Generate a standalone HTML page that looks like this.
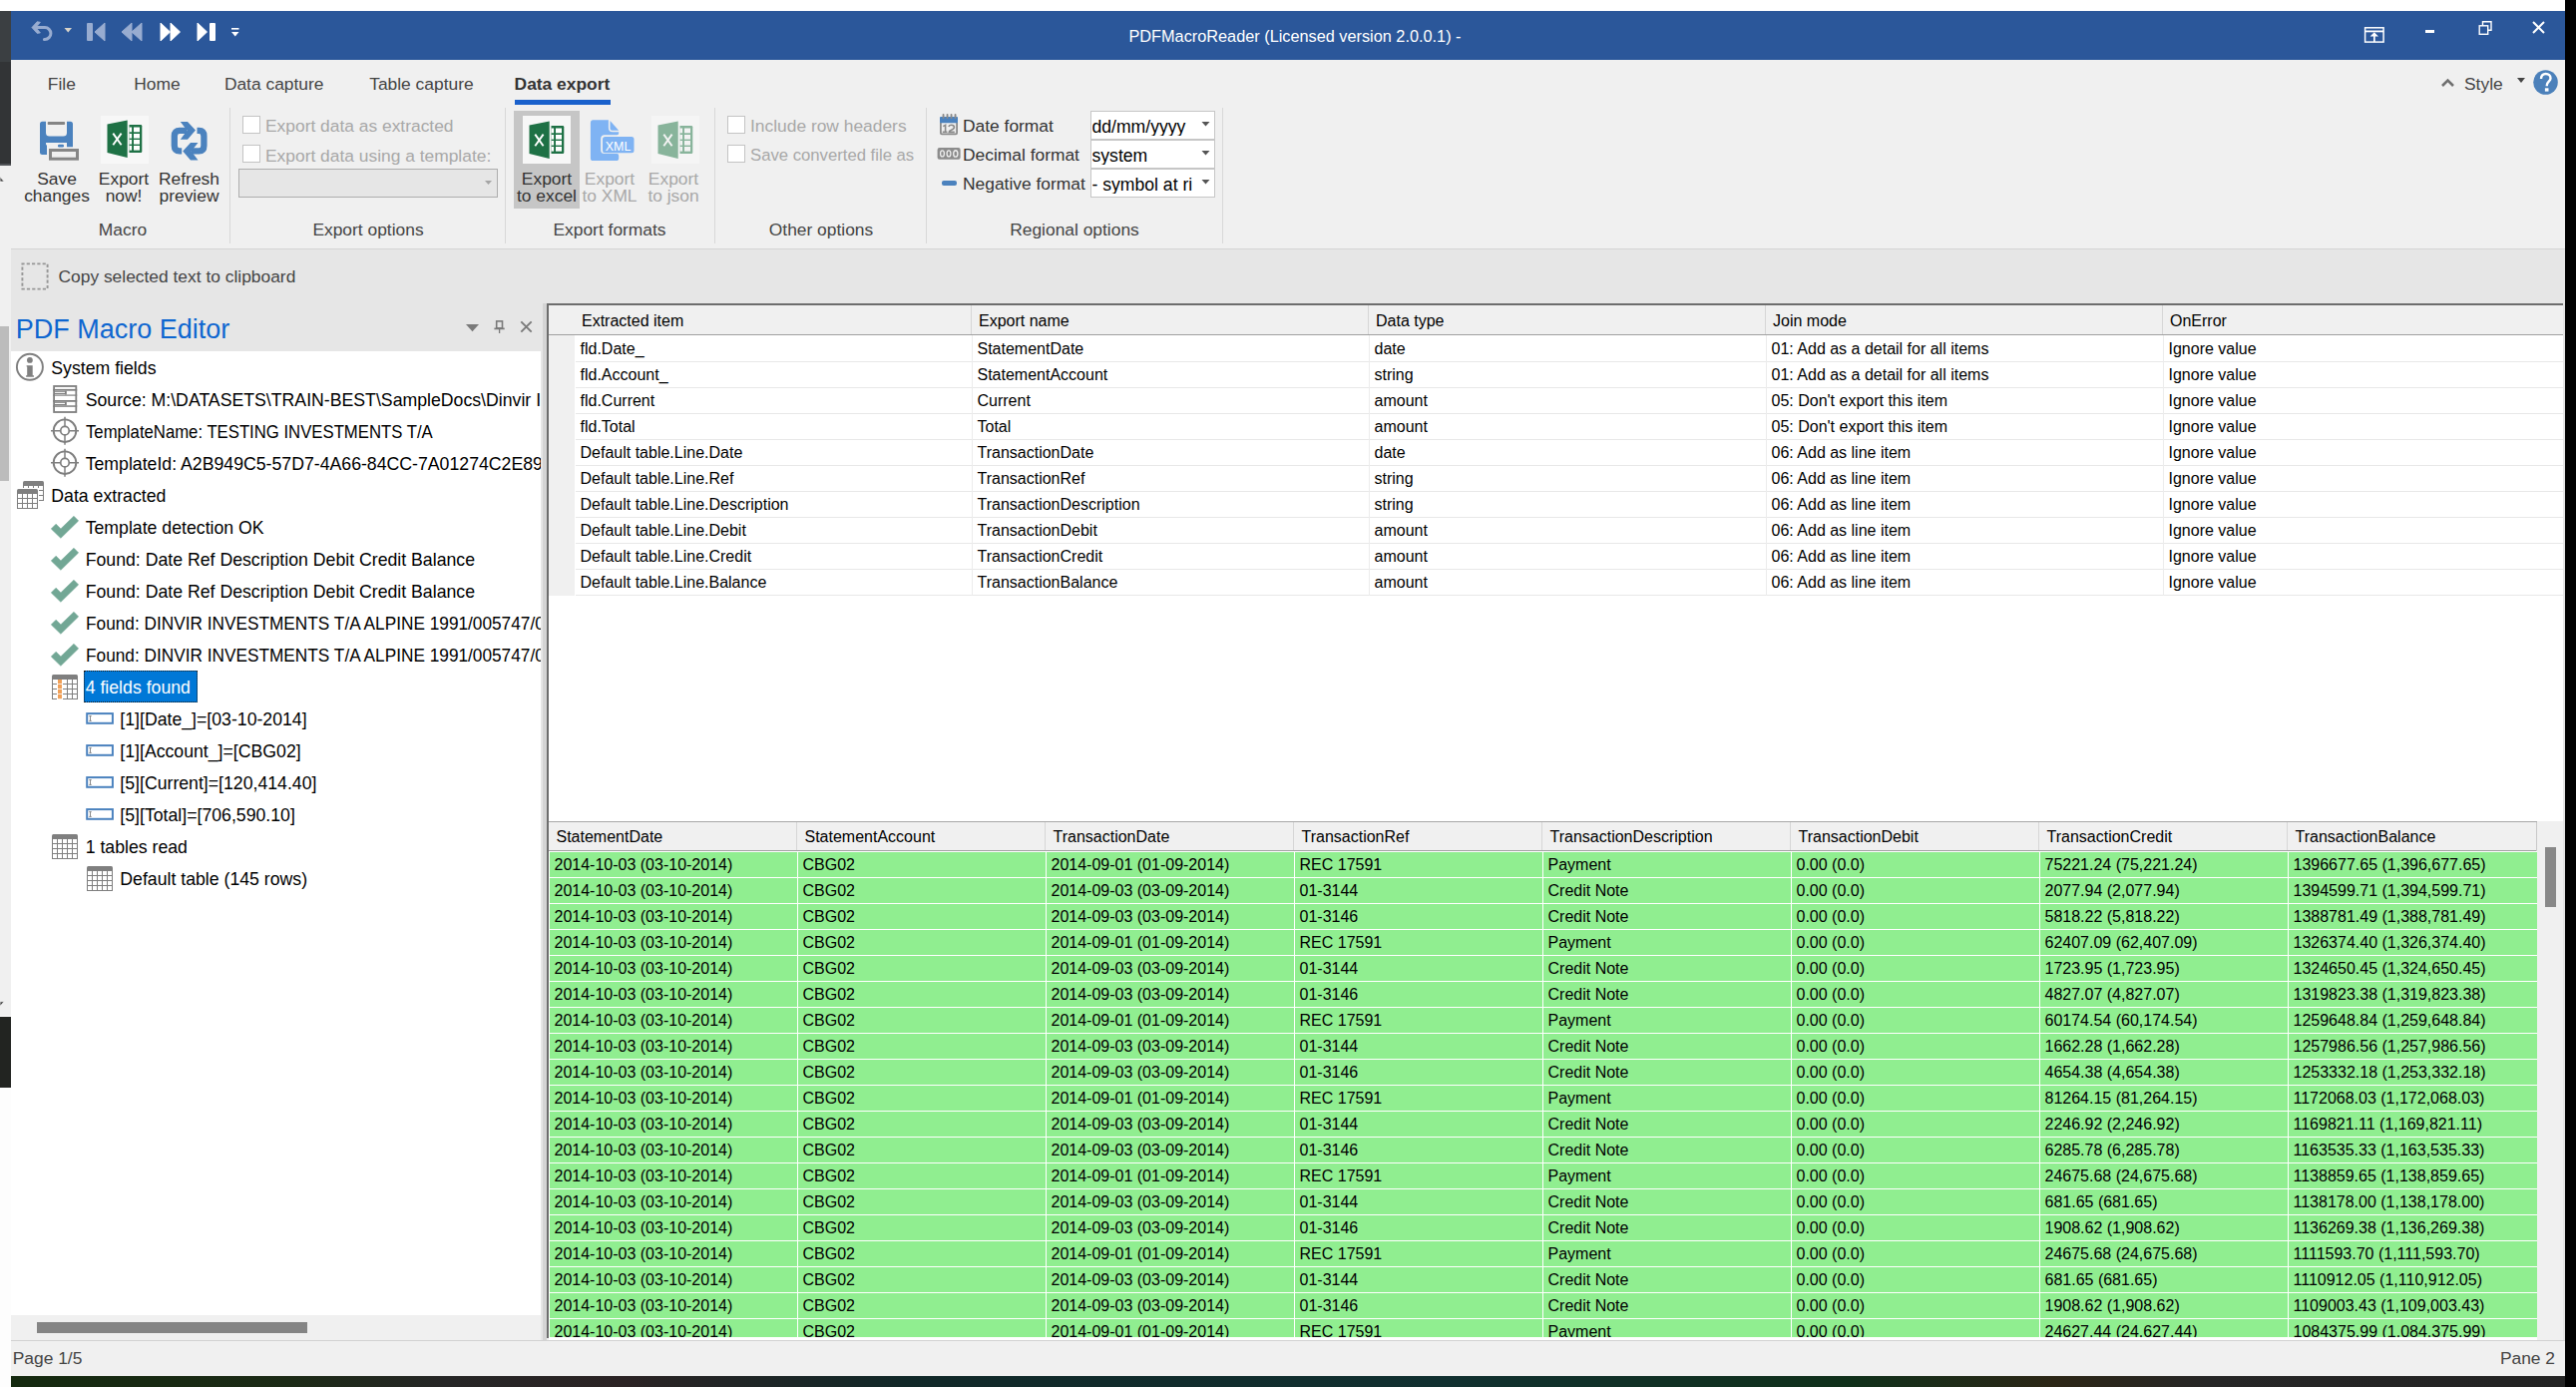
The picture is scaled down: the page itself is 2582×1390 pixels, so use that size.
<!DOCTYPE html>
<html><head><meta charset="utf-8"><title>PDFMacroReader</title>
<style>
html,body{margin:0;padding:0;}
body{width:2582px;height:1390px;position:relative;overflow:hidden;background:#f0f0f0;font-family:"Liberation Sans",sans-serif;}
.t{position:absolute;white-space:nowrap;font-family:"Liberation Sans",sans-serif;}
svg{overflow:visible}
</style></head><body>
<div style="position:absolute;left:0px;top:0px;width:2582px;height:11px;background:#ffffff;"></div>
<div style="position:absolute;left:2571px;top:0px;width:11px;height:1390px;background:#000000;"></div>
<div style="position:absolute;left:0px;top:11px;width:11px;height:51px;background:#3b3f42;"></div>
<div style="position:absolute;left:0px;top:62px;width:11px;height:103px;background:#323436;"></div>
<div style="position:absolute;left:0px;top:165px;width:11px;height:162px;background:#f0f0f0;"></div>
<div style="position:absolute;left:0px;top:327px;width:9px;height:155px;background:#bcbcbc;"></div>
<div style="position:absolute;left:9px;top:327px;width:2px;height:155px;background:#f0f0f0;"></div>
<div style="position:absolute;left:0px;top:482px;width:11px;height:536px;background:#f0f0f0;"></div>
<div style="position:absolute;left:0px;top:1019px;width:11px;height:71px;background:#222421;"></div>
<div style="position:absolute;left:0px;top:1090px;width:11px;height:300px;background:#fdfdfd;"></div>
<div style="position:absolute;left:0px;top:164px;width:11px;height:2px;background:#505357;"></div>
<svg style="position:absolute;left:0px;top:170px" width="10" height="20" viewBox="0 170 10 20"><path d="M0 177.3 L4.3 182 H0 Z" fill="#454545" stroke="#fff" stroke-width="0.7"/></svg>
<svg style="position:absolute;left:0px;top:1000px" width="10" height="12" viewBox="0 1000 10 12"><path d="M0 1003.8 H4.3 L0 1008.3 Z" fill="#454545" stroke="#fff" stroke-width="0.7"/></svg>
<div style="position:absolute;left:0px;top:1018px;width:11px;height:1px;background:#ffffff;"></div>
<div style="position:absolute;left:11px;top:1379px;width:2560px;height:11px;background:#1c241a;background:linear-gradient(90deg,#14290f 0%,#1c2a16 11%,#262626 17%,#2b2324 24%,#112828 35%,#113030 56%,#10301a 72%,#2c2616 80%,#262626 86%,#232323 100%);"></div>
<div style="position:absolute;left:11px;top:11px;width:2560px;height:49px;background:#2b579a;"></div>
<svg style="position:absolute;left:26px;top:17px" width="32" height="28" viewBox="26 17 32 28"><path d="M31.9 27.6 L37.2 21.7 L40.4 22.3 L37.3 26.1 L37.3 29.1 L40.4 32.9 L37.2 33.4 Z" fill="#98acd0" stroke="#98acd0" stroke-width="0.8" stroke-linejoin="round"/><path d="M36.5 27.6 H45 A5.9 5.9 0 0 1 45 39.4 H44.4" fill="none" stroke="#98acd0" stroke-width="3" stroke-linecap="round"/></svg>
<svg style="position:absolute;left:63px;top:26px" width="12" height="8" viewBox="0 0 12 8"><path d="M1.5 2 H9 L5.25 6.5 Z" fill="#d8d3c8"/></svg>
<svg style="position:absolute;left:86px;top:22px" width="20" height="20" viewBox="0 0 20 20"><rect x="1" y="1" width="6" height="18" rx="1" fill="#98acd0"/><path d="M19 1 V19 L9 10 Z" fill="#98acd0" stroke="#98acd0" stroke-width="1" stroke-linejoin="round"/></svg>
<svg style="position:absolute;left:121px;top:22px" width="22" height="20" viewBox="0 0 22 20"><path d="M11 1 V19 L1 10 Z M21 1 V19 L11 10 Z" fill="#98acd0" stroke="#98acd0" stroke-width="1" stroke-linejoin="round"/></svg>
<svg style="position:absolute;left:160px;top:22px" width="22" height="20" viewBox="0 0 22 20"><path d="M1 1 V19 L10.5 10 Z M11 1 V19 L20.5 10 Z" fill="#fff" stroke="#fff" stroke-width="1" stroke-linejoin="round"/></svg>
<svg style="position:absolute;left:197px;top:22px" width="21" height="20" viewBox="0 0 21 20"><path d="M1 1 V19 L10.5 10 Z" fill="#fff" stroke="#fff" stroke-width="1" stroke-linejoin="round"/><rect x="13" y="1" width="6" height="18" rx="1" fill="#fff"/></svg>
<svg style="position:absolute;left:231px;top:27px" width="10" height="11" viewBox="0 0 10 11"><rect x="1" y="1" width="7.5" height="1.6" fill="#fff"/><path d="M1 5 H8.5 L4.75 9.5 Z" fill="#fff"/></svg>
<div class="t" style="left:1131.5px;top:28.00px;font-size:16.3px;line-height:16.3px;color:#ffffff;">PDFMacroReader (Licensed version 2.0.0.1) -</div>
<svg style="position:absolute;left:2366px;top:24px" width="28" height="22" viewBox="2366 24 28 22"><rect x="2370.6" y="27.8" width="18.5" height="14.3" fill="none" stroke="#fff" stroke-width="1.5"/><path d="M2370.6 31.4 H2389.1" stroke="#fff" stroke-width="1.8"/><path d="M2379.8 32.2 L2384 36.5 H2375.6 Z" fill="#fff"/><rect x="2379" y="36" width="1.7" height="6.1" fill="#fff"/></svg>
<div style="position:absolute;left:2431px;top:30px;width:9px;height:3px;background:#ffffff;"></div>
<svg style="position:absolute;left:2484px;top:20px" width="15" height="16" viewBox="0 0 15 16"><rect x="1.2" y="5.8" width="8.5" height="8.5" fill="none" stroke="#fff" stroke-width="1.4"/><path d="M4.5 5.8 V1.7 H13 V10.2 H9.7" fill="none" stroke="#fff" stroke-width="1.4"/></svg>
<svg style="position:absolute;left:2538px;top:21px" width="13" height="13" viewBox="0 0 13 13"><path d="M1 1 L12 12 M12 1 L1 12" stroke="#fff" stroke-width="2"/></svg>
<div style="position:absolute;left:11px;top:60px;width:2560px;height:189px;background:#f0f0f0;"></div>
<div style="position:absolute;left:11px;top:249px;width:2560px;height:1px;background:#d5d5d5;"></div>
<div class="t" style="left:47.8px;top:75.57px;font-size:17.4px;line-height:17.4px;color:#444444;">File</div>
<div class="t" style="left:134.2px;top:75.57px;font-size:17.4px;line-height:17.4px;color:#444444;">Home</div>
<div class="t" style="left:224.9px;top:75.57px;font-size:17.4px;line-height:17.4px;color:#444444;">Data capture</div>
<div class="t" style="left:370.2px;top:75.57px;font-size:17.4px;line-height:17.4px;color:#444444;">Table capture</div>
<div class="t" style="left:515.6px;top:75.57px;font-size:17.4px;line-height:17.4px;color:#333333;font-weight:bold;">Data export</div>
<div style="position:absolute;left:516px;top:100px;width:96px;height:5px;background:#1a61cc;"></div>
<svg style="position:absolute;left:2446px;top:77px" width="15" height="12" viewBox="0 0 15 12"><path d="M2 9 L7.5 3.5 L13 9" fill="none" stroke="#707070" stroke-width="2.6"/></svg>
<div class="t" style="left:2470px;top:75.67px;font-size:17.4px;line-height:17.4px;color:#444444;">Style</div>
<svg style="position:absolute;left:2522px;top:77px" width="10" height="8" viewBox="0 0 10 8"><path d="M1 1 H9 L5 6 Z" fill="#444"/></svg>
<svg style="position:absolute;left:2538px;top:69px" width="27" height="27" viewBox="0 0 27 27"><circle cx="13.5" cy="13.5" r="12.3" fill="#4b80ba"/><path d="M9 10 C9 6.5 11 5 13.7 5 C16.5 5 18.5 6.8 18.5 9.5 C18.5 12.5 14.8 13 14.8 16.5 V17.2" fill="none" stroke="#fff" stroke-width="2.4"/><rect x="12.9" y="19.3" width="3.6" height="3.3" fill="#fff"/></svg>
<div style="position:absolute;left:230px;top:108px;width:1px;height:136px;background:#d8d8d8;"></div>
<div style="position:absolute;left:506px;top:108px;width:1px;height:136px;background:#d8d8d8;"></div>
<div style="position:absolute;left:716px;top:108px;width:1px;height:136px;background:#d8d8d8;"></div>
<div style="position:absolute;left:928px;top:108px;width:1px;height:136px;background:#d8d8d8;"></div>
<div style="position:absolute;left:1225px;top:108px;width:1px;height:136px;background:#d8d8d8;"></div>
<svg style="position:absolute;left:34px;top:114px" width="50" height="52" viewBox="0 0 50 52">
<path d="M8.5 7.7 H12 V19 Q12 22.5 15.5 22.5 H29.5 Q33 22.5 33 19 V7.7 H36.5 Q39 7.7 39 10.2 V33.2 H33 V28.9 H12 V30.5 L13 32 V40.9 H8.5 Q6 40.9 6 38.4 V10.2 Q6 7.7 8.5 7.7 Z" fill="#4b82be"/>
<rect x="13.7" y="8" width="17.4" height="2.9" rx="1" fill="#848484"/>
<rect x="24" y="30.7" width="6" height="2.7" rx="1.2" fill="#4b82be"/>
<rect x="16.5" y="36.5" width="27" height="8.7" fill="none" stroke="#868686" stroke-width="3"/>
</svg>
<div style="position:absolute;left:101px;top:116px;width:48px;height:48px;background:rgba(255,255,255,0.45);"></div>
<svg style="position:absolute;left:106.7px;top:120px" width="37" height="40" viewBox="0 0 37 40">
<path d="M0.5 4.6 L20.7 0.4 V38.1 L0.5 33 Z" fill="#1e7145"/>
<path d="M6.3 13.6 L14.6 25.3 M14.6 13.6 L6.3 25.3" stroke="#ffffff" stroke-width="1.9"/>
<path d="M22.5 5 H34 Q35.3 5 35.3 6.3 V31.7 Q35.3 33 34 33 H22.5 Z" fill="#1e7145"/>
<rect x="27" y="7.5" width="6" height="4.8" fill="#ffffff"/>
<rect x="27" y="14" width="6" height="4.6" fill="#ffffff"/>
<rect x="27" y="20" width="6" height="4.6" fill="#ffffff"/>
<rect x="27" y="26" width="6" height="4.6" fill="#ffffff"/>
<rect x="22.5" y="7.5" width="2.6" height="4.8" fill="#ffffff"/>
<rect x="22.5" y="14" width="2.6" height="4.6" fill="#ffffff"/>
<rect x="22.5" y="20" width="2.6" height="4.6" fill="#ffffff"/>
<rect x="22.5" y="26" width="2.6" height="4.6" fill="#ffffff"/>
</svg>
<svg style="position:absolute;left:171px;top:121px" width="38" height="41" viewBox="0 0 38 41">
<path d="M11.2 30.4 H9 Q3.8 30.4 3.8 25 V15.2 Q3.8 9.85 9 9.85 H16" fill="none" stroke="#4b82be" stroke-width="6.3"/>
<path d="M9.8 1 H17 L25 9.6 L17 18.7 H9.8 L16.5 9.8 Z" fill="#4b82be"/>
<path d="M26.5 9.85 H28.5 Q33.4 9.85 33.4 15.2 V25 Q33.4 30.4 28.5 30.4 H21" fill="none" stroke="#4b82be" stroke-width="6.3"/>
<path d="M27.5 22 H20 L12.2 30.6 L20 39.5 H27.5 L20.7 30.4 Z" fill="#4b82be"/>
</svg>
<div class="t" style="left:-143px;width:400px;text-align:center;top:170.77px;font-size:17.4px;line-height:17.4px;color:#333333;">Save</div>
<div class="t" style="left:-143px;width:400px;text-align:center;top:187.57px;font-size:17.4px;line-height:17.4px;color:#333333;">changes</div>
<div class="t" style="left:-76px;width:400px;text-align:center;top:170.77px;font-size:17.4px;line-height:17.4px;color:#333333;">Export</div>
<div class="t" style="left:-76px;width:400px;text-align:center;top:187.57px;font-size:17.4px;line-height:17.4px;color:#333333;">now!</div>
<div class="t" style="left:-10.5px;width:400px;text-align:center;top:170.77px;font-size:17.4px;line-height:17.4px;color:#333333;">Refresh</div>
<div class="t" style="left:-10.5px;width:400px;text-align:center;top:187.57px;font-size:17.4px;line-height:17.4px;color:#333333;">preview</div>
<div class="t" style="left:-77px;width:400px;text-align:center;top:222.27px;font-size:17.4px;line-height:17.4px;color:#444444;">Macro</div>
<div style="position:absolute;left:243px;top:116px;width:18px;height:18px;background:#ffffff;box-sizing:border-box;border:1px solid #c4c4c4;"></div>
<div style="position:absolute;left:243px;top:145px;width:18px;height:18px;background:#ffffff;box-sizing:border-box;border:1px solid #c4c4c4;"></div>
<div class="t" style="left:266px;top:118.47px;font-size:17.4px;line-height:17.4px;color:#a8a8a8;">Export data as extracted</div>
<div class="t" style="left:266px;top:147.57px;font-size:17.4px;line-height:17.4px;color:#a8a8a8;">Export data using a template:</div>
<div style="position:absolute;left:239px;top:169px;width:260px;height:29px;background:#e6e6e6;box-sizing:border-box;border:1px solid #adadad;"></div>
<svg style="position:absolute;left:485px;top:180px" width="10" height="7" viewBox="0 0 10 7"><path d="M1 1 H8 L4.5 5 Z" fill="#a5a5a5"/></svg>
<div class="t" style="left:169px;width:400px;text-align:center;top:222.27px;font-size:17.4px;line-height:17.4px;color:#444444;">Export options</div>
<div style="position:absolute;left:515px;top:111px;width:66px;height:98px;background:#c6c6c6;"></div>
<div style="position:absolute;left:524px;top:116px;width:48px;height:48px;background:rgba(255,255,255,0.85);"></div>
<svg style="position:absolute;left:529.9px;top:120.5px" width="37" height="40" viewBox="0 0 37 40">
<path d="M0.5 4.6 L20.7 0.4 V38.1 L0.5 33 Z" fill="#1e7145"/>
<path d="M6.3 13.6 L14.6 25.3 M14.6 13.6 L6.3 25.3" stroke="#ffffff" stroke-width="1.9"/>
<path d="M22.5 5 H34 Q35.3 5 35.3 6.3 V31.7 Q35.3 33 34 33 H22.5 Z" fill="#1e7145"/>
<rect x="27" y="7.5" width="6" height="4.8" fill="#ffffff"/>
<rect x="27" y="14" width="6" height="4.6" fill="#ffffff"/>
<rect x="27" y="20" width="6" height="4.6" fill="#ffffff"/>
<rect x="27" y="26" width="6" height="4.6" fill="#ffffff"/>
<rect x="22.5" y="7.5" width="2.6" height="4.8" fill="#ffffff"/>
<rect x="22.5" y="14" width="2.6" height="4.6" fill="#ffffff"/>
<rect x="22.5" y="20" width="2.6" height="4.6" fill="#ffffff"/>
<rect x="22.5" y="26" width="2.6" height="4.6" fill="#ffffff"/>
</svg>
<div class="t" style="left:348px;width:400px;text-align:center;top:170.77px;font-size:17.4px;line-height:17.4px;color:#333333;">Export</div>
<div class="t" style="left:348px;width:400px;text-align:center;top:187.57px;font-size:17.4px;line-height:17.4px;color:#333333;">to excel</div>
<svg style="position:absolute;left:586px;top:114px" width="52" height="50" viewBox="0 0 52 50">
<path d="M8 6.3 H23.9 V14 Q23.9 18.2 28 18.2 H34.2 V19.5 Q34.2 21.2 32.5 21.2 H20 Q16.2 21.2 16.2 25 V36.5 Q16.2 40.1 20 40.1 H32.5 Q34.2 40.1 34.2 42 V44.5 Q34.2 47.1 31.5 47.1 H8.5 Q5.9 47.1 5.9 44.5 V8.9 Q5.9 6.3 8 6.3 Z" fill="#7fb3f3"/>
<path d="M25.5 7 L34.2 16.7 H27.5 Q25.5 16.7 25.5 14.7 Z" fill="#7fb3f3"/>
<rect x="18" y="23" width="31.5" height="16.2" rx="2.5" fill="#7fb3f3"/>
<text x="33.6" y="36.5" text-anchor="middle" font-family="Liberation Sans" font-size="12.5" fill="#fff" textLength="25.5" lengthAdjust="spacingAndGlyphs">XML</text>
</svg>
<div class="t" style="left:411px;width:400px;text-align:center;top:170.77px;font-size:17.4px;line-height:17.4px;color:#a8a8a8;">Export</div>
<div class="t" style="left:411px;width:400px;text-align:center;top:187.57px;font-size:17.4px;line-height:17.4px;color:#a8a8a8;">to XML</div>
<div style="position:absolute;left:653px;top:116px;width:48px;height:48px;background:rgba(255,255,255,0.35);"></div>
<svg style="position:absolute;left:658.7px;top:120.5px" width="37" height="40" viewBox="0 0 37 40">
<path d="M0.5 4.6 L20.7 0.4 V38.1 L0.5 33 Z" fill="#88b49b"/>
<path d="M6.3 13.6 L14.6 25.3 M14.6 13.6 L6.3 25.3" stroke="#f3f3f3" stroke-width="1.9"/>
<path d="M22.5 5 H34 Q35.3 5 35.3 6.3 V31.7 Q35.3 33 34 33 H22.5 Z" fill="#88b49b"/>
<rect x="27" y="7.5" width="6" height="4.8" fill="#f3f3f3"/>
<rect x="27" y="14" width="6" height="4.6" fill="#f3f3f3"/>
<rect x="27" y="20" width="6" height="4.6" fill="#f3f3f3"/>
<rect x="27" y="26" width="6" height="4.6" fill="#f3f3f3"/>
<rect x="22.5" y="7.5" width="2.6" height="4.8" fill="#f3f3f3"/>
<rect x="22.5" y="14" width="2.6" height="4.6" fill="#f3f3f3"/>
<rect x="22.5" y="20" width="2.6" height="4.6" fill="#f3f3f3"/>
<rect x="22.5" y="26" width="2.6" height="4.6" fill="#f3f3f3"/>
</svg>
<div class="t" style="left:475px;width:400px;text-align:center;top:170.77px;font-size:17.4px;line-height:17.4px;color:#a8a8a8;">Export</div>
<div class="t" style="left:475px;width:400px;text-align:center;top:187.57px;font-size:17.4px;line-height:17.4px;color:#a8a8a8;">to json</div>
<div class="t" style="left:411px;width:400px;text-align:center;top:222.27px;font-size:17.4px;line-height:17.4px;color:#444444;">Export formats</div>
<div style="position:absolute;left:729px;top:116px;width:18px;height:18px;background:#ffffff;box-sizing:border-box;border:1px solid #c4c4c4;"></div>
<div style="position:absolute;left:729px;top:145px;width:18px;height:18px;background:#ffffff;box-sizing:border-box;border:1px solid #c4c4c4;"></div>
<div class="t" style="left:752px;top:118.47px;font-size:17.4px;line-height:17.4px;color:#a8a8a8;">Include row headers</div>
<div class="t" style="left:752px;top:148.16px;font-size:16.7px;line-height:16.7px;color:#a8a8a8;">Save converted file as</div>
<div class="t" style="left:623px;width:400px;text-align:center;top:222.27px;font-size:17.4px;line-height:17.4px;color:#444444;">Other options</div>
<svg style="position:absolute;left:938px;top:110px" width="26" height="28" viewBox="938 110 26 28"><path d="M942.9 123 V133.3 Q942.9 134.4 944 134.4 H958 Q959.1 134.4 959.1 133.3 V123" fill="none" stroke="#8a8a8a" stroke-width="1.8"/><rect x="942" y="117" width="18" height="6.2" rx="0.8" fill="#4b82be"/><rect x="944.6" y="114" width="1.9" height="5" rx="0.9" fill="#8a8a8a"/><rect x="948.6" y="114" width="1.9" height="5" rx="0.9" fill="#8a8a8a"/><rect x="952.6" y="114" width="1.9" height="5" rx="0.9" fill="#8a8a8a"/><rect x="956.6" y="114" width="1.9" height="5" rx="0.9" fill="#8a8a8a"/><path d="M945.3 126.6 L947.6 125.3 V132.3 M944.8 132.3 H949.4 M950.8 126.8 Q951.6 125.3 953.6 125.3 Q956.4 125.3 956.4 127.6 Q956.4 129.3 953.6 130.3 Q951.2 131.2 951.2 132.4 H956.8" fill="none" stroke="#8a8a8a" stroke-width="1.6"/></svg>
<svg style="position:absolute;left:938px;top:146px" width="26" height="16" viewBox="0 0 26 16">
<rect x="1.6" y="2" width="23" height="11.8" rx="2" fill="#8c8c8c"/>
<ellipse cx="6.5" cy="7.9" rx="1.9" ry="3" fill="none" stroke="#eee" stroke-width="1.3"/>
<ellipse cx="13" cy="7.9" rx="1.9" ry="3" fill="none" stroke="#eee" stroke-width="1.3"/>
<ellipse cx="19.8" cy="7.9" rx="2.1" ry="3.2" fill="none" stroke="#eee" stroke-width="1.4"/>
</svg>
<div style="position:absolute;left:943.5px;top:180.7px;width:15.0px;height:5.0px;background:#4b82be;border-radius:2px;"></div>
<div class="t" style="left:965px;top:117.77px;font-size:17.4px;line-height:17.4px;color:#333333;">Date format</div>
<div class="t" style="left:965px;top:146.77px;font-size:17.4px;line-height:17.4px;color:#333333;">Decimal format</div>
<div class="t" style="left:965px;top:175.77px;font-size:17.4px;line-height:17.4px;color:#333333;">Negative format</div>
<div style="position:absolute;left:1093px;top:111px;width:125px;height:29px;background:#ffffff;box-sizing:border-box;border:1px solid #c6c6c6;"></div>
<div class="t" style="left:1094.5px;top:118.60px;font-size:17.6px;line-height:17.6px;color:#000;width:105px;overflow:hidden;white-space:nowrap;">dd/mm/yyyy</div>
<svg style="position:absolute;left:1203px;top:121px" width="11" height="7" viewBox="0 0 11 7"><path d="M1.5 1 H9.5 L5.5 5.5 Z" fill="#555"/></svg>
<div style="position:absolute;left:1093px;top:140px;width:125px;height:29px;background:#ffffff;box-sizing:border-box;border:1px solid #c6c6c6;"></div>
<div class="t" style="left:1094.5px;top:147.60px;font-size:17.6px;line-height:17.6px;color:#000;width:105px;overflow:hidden;white-space:nowrap;">system</div>
<svg style="position:absolute;left:1203px;top:150px" width="11" height="7" viewBox="0 0 11 7"><path d="M1.5 1 H9.5 L5.5 5.5 Z" fill="#555"/></svg>
<div style="position:absolute;left:1093px;top:169px;width:125px;height:29px;background:#ffffff;box-sizing:border-box;border:1px solid #c6c6c6;"></div>
<div class="t" style="left:1094.5px;top:176.60px;font-size:17.6px;line-height:17.6px;color:#000;width:105px;overflow:hidden;white-space:nowrap;">- symbol at ri</div>
<svg style="position:absolute;left:1203px;top:179px" width="11" height="7" viewBox="0 0 11 7"><path d="M1.5 1 H9.5 L5.5 5.5 Z" fill="#555"/></svg>
<div style="position:absolute;left:1093px;top:140px;width:125px;height:1px;background:#c6c6c6;"></div>
<div style="position:absolute;left:1093px;top:169px;width:125px;height:1px;background:#c6c6c6;"></div>
<div class="t" style="left:877px;width:400px;text-align:center;top:222.27px;font-size:17.4px;line-height:17.4px;color:#444444;">Regional options</div>
<div style="position:absolute;left:11px;top:250px;width:2560px;height:102px;background:#e6e6e6;"></div>
<svg style="position:absolute;left:19px;top:261px" width="32" height="32" viewBox="19 261 32 32"><rect x="22.4" y="264.4" width="25.2" height="25.2" fill="none" stroke="#969696" stroke-width="1.9" stroke-dasharray="3.2 2.1" stroke-dashoffset="1"/></svg>
<div class="t" style="left:58.5px;top:269.37px;font-size:17.4px;line-height:17.4px;color:#444444;">Copy selected text to clipboard</div>
<div class="t" style="left:15.8px;top:316.54px;font-size:27px;line-height:27px;color:#0e66d0;">PDF Macro Editor</div>
<svg style="position:absolute;left:466px;top:324px" width="15" height="10" viewBox="0 0 15 10"><path d="M1 1 H14 L7.5 8.3 Z" fill="#7a7a7a"/></svg>
<svg style="position:absolute;left:493px;top:319px" width="15" height="17" viewBox="493 319 15 17"><rect x="497.7" y="321.9" width="5.8" height="7" fill="none" stroke="#7a7a7a" stroke-width="1.6"/><path d="M495.4 329.4 H505.7" stroke="#7a7a7a" stroke-width="1.7"/><path d="M500.6 330 V334" stroke="#7a7a7a" stroke-width="1.3"/></svg>
<svg style="position:absolute;left:521px;top:321px" width="13" height="13" viewBox="0 0 13 13"><path d="M1.3 1.3 L11.7 11.7 M11.7 1.3 L1.3 11.7" stroke="#7a7a7a" stroke-width="1.9"/></svg>
<div style="position:absolute;left:11px;top:352px;width:531px;height:966px;background:#ffffff;"></div>
<div style="position:absolute;left:11px;top:1318px;width:531px;height:25px;background:#f0f0f0;"></div>
<div style="position:absolute;left:37px;top:1325px;width:271px;height:11px;background:#858585;"></div>
<div style="position:absolute;left:542px;top:304px;width:2px;height:1039px;background:#e6e6e6;"></div>
<div style="position:absolute;left:544px;top:304px;width:4px;height:1039px;background:#d4d4d4;"></div>
<svg style="position:absolute;left:12px;top:350px" width="36" height="36" viewBox="12 350 36 36"><circle cx="29.9" cy="367.8" r="13" fill="none" stroke="#7f7f7f" stroke-width="1.9"/><circle cx="29.9" cy="360.9" r="2.9" fill="#7f7f7f"/><path d="M26.6 366.2 H32.7 V376.3 H34 V377.8 H26.1 V376.3 H27.2 V367.6 H26.6 Z" fill="#7f7f7f"/></svg>
<svg style="position:absolute;left:50px;top:384px" width="30" height="32" viewBox="50 384 30 32"><rect x="54.1" y="387" width="22.2" height="26" fill="none" stroke="#7f7f7f" stroke-width="1.8"/><rect x="53.2" y="389.9" width="24" height="1.8" fill="#7f7f7f"/><rect x="53.2" y="395.5" width="24" height="1.2" fill="#7f7f7f"/><rect x="53.2" y="401" width="24" height="1.8" fill="#7f7f7f"/><rect x="53.2" y="406.3" width="24" height="1.5" fill="#7f7f7f"/><rect x="65" y="391.7" width="1.8" height="3.8" fill="#7f7f7f"/><rect x="65" y="402.8" width="1.8" height="3.5" fill="#7f7f7f"/><rect x="54.9" y="392.2" width="10.1" height="0.8" fill="#7f7f7f"/><rect x="54.9" y="393.9" width="10.1" height="1.1" fill="#7f7f7f"/><rect x="54.9" y="403" width="10.1" height="0.8" fill="#7f7f7f"/><rect x="54.9" y="405" width="10.1" height="1.1" fill="#7f7f7f"/></svg>
<svg style="position:absolute;left:48px;top:415px" width="34" height="33" viewBox="48 415 34 33"><circle cx="65" cy="431.7" r="11.3" fill="none" stroke="#7f7f7f" stroke-width="1.9"/><circle cx="65" cy="431.7" r="4.25" fill="none" stroke="#7f7f7f" stroke-width="1.7"/><path d="M65 417.7 V427.5 M65 435.9 V445.7 M51 431.7 H60.8 M69.2 431.7 H79" stroke="#7f7f7f" stroke-width="1.5"/></svg>
<svg style="position:absolute;left:48px;top:447px" width="34" height="33" viewBox="48 447 34 33"><circle cx="65" cy="463.7" r="11.3" fill="none" stroke="#7f7f7f" stroke-width="1.9"/><circle cx="65" cy="463.7" r="4.25" fill="none" stroke="#7f7f7f" stroke-width="1.7"/><path d="M65 449.7 V459.5 M65 467.9 V477.7 M51 463.7 H60.8 M69.2 463.7 H79" stroke="#7f7f7f" stroke-width="1.5"/></svg>
<svg style="position:absolute;left:14px;top:478px" width="34" height="36" viewBox="14 478 34 36"><path d="M23 487 V483.5 Q23 482 24.5 482 H42.5 Q44 482 44 483.5 V487 Z" fill="#7f7f7f"/><rect x="23" y="486" width="21" height="16" fill="#7f7f7f"/><rect x="24" y="487" width="4" height="4" fill="#fff"/><rect x="24" y="492" width="4" height="4" fill="#fff"/><rect x="24" y="497" width="4" height="4" fill="#fff"/><rect x="29" y="487" width="4" height="4" fill="#fff"/><rect x="29" y="492" width="4" height="4" fill="#fff"/><rect x="29" y="497" width="4" height="4" fill="#fff"/><rect x="34" y="487" width="4" height="4" fill="#fff"/><rect x="34" y="492" width="4" height="4" fill="#fff"/><rect x="34" y="497" width="4" height="4" fill="#fff"/><rect x="39" y="487" width="4" height="4" fill="#fff"/><rect x="39" y="492" width="4" height="4" fill="#fff"/><rect x="39" y="497" width="4" height="4" fill="#fff"/><rect x="16" y="489" width="23" height="22" fill="#fff"/><path d="M17 495 V491.5 Q17 490 18.5 490 H36.5 Q38 490 38 491.5 V495 Z" fill="#7f7f7f"/><rect x="17" y="494" width="21" height="16" fill="#7f7f7f"/><rect x="18" y="495" width="4" height="4" fill="#fff"/><rect x="18" y="500" width="4" height="4" fill="#fff"/><rect x="18" y="505" width="4" height="4" fill="#fff"/><rect x="23" y="495" width="4" height="4" fill="#fff"/><rect x="23" y="500" width="4" height="4" fill="#fff"/><rect x="23" y="505" width="4" height="4" fill="#fff"/><rect x="28" y="495" width="4" height="4" fill="#fff"/><rect x="28" y="500" width="4" height="4" fill="#fff"/><rect x="28" y="505" width="4" height="4" fill="#fff"/><rect x="33" y="495" width="4" height="4" fill="#fff"/><rect x="33" y="500" width="4" height="4" fill="#fff"/><rect x="33" y="505" width="4" height="4" fill="#fff"/></svg>
<svg style="position:absolute;left:48px;top:514px" width="34" height="29" viewBox="48 514 34 29"><path d="M51.3 530 L56.1 525.2 L60.9 529.9 L74 517.3 L78.6 521.9 L60.9 539.3 Z" fill="#72a795" stroke="#72a795" stroke-width="0.6" stroke-linejoin="round"/></svg>
<svg style="position:absolute;left:48px;top:546px" width="34" height="29" viewBox="48 546 34 29"><path d="M51.3 562 L56.1 557.2 L60.9 561.9 L74 549.3 L78.6 553.9 L60.9 571.3 Z" fill="#72a795" stroke="#72a795" stroke-width="0.6" stroke-linejoin="round"/></svg>
<svg style="position:absolute;left:48px;top:578px" width="34" height="29" viewBox="48 578 34 29"><path d="M51.3 594 L56.1 589.2 L60.9 593.9 L74 581.3 L78.6 585.9 L60.9 603.3 Z" fill="#72a795" stroke="#72a795" stroke-width="0.6" stroke-linejoin="round"/></svg>
<svg style="position:absolute;left:48px;top:610px" width="34" height="29" viewBox="48 610 34 29"><path d="M51.3 626 L56.1 621.2 L60.9 625.9 L74 613.3 L78.6 617.9 L60.9 635.3 Z" fill="#72a795" stroke="#72a795" stroke-width="0.6" stroke-linejoin="round"/></svg>
<svg style="position:absolute;left:48px;top:642px" width="34" height="29" viewBox="48 642 34 29"><path d="M51.3 658 L56.1 653.2 L60.9 657.9 L74 645.3 L78.6 649.9 L60.9 667.3 Z" fill="#72a795" stroke="#72a795" stroke-width="0.6" stroke-linejoin="round"/></svg>
<svg style="position:absolute;left:51px;top:675px" width="29" height="28" viewBox="51 675 29 28"><path d="M52 681 V677.5 Q52 676 53.5 676 H76.5 Q78 676 78 677.5 V681 Z" fill="#7f7f7f"/><rect x="52" y="680" width="26" height="21" fill="#7f7f7f"/><rect x="53" y="681" width="4" height="4" fill="#fff"/><rect x="53" y="686" width="4" height="4" fill="#fff"/><rect x="53" y="691" width="4" height="4" fill="#fff"/><rect x="53" y="696" width="4" height="4" fill="#fff"/><rect x="58" y="681" width="4" height="4" fill="#fff"/><rect x="58" y="686" width="4" height="4" fill="#fff"/><rect x="58" y="691" width="4" height="4" fill="#fff"/><rect x="58" y="696" width="4" height="4" fill="#fff"/><rect x="63" y="681" width="4" height="4" fill="#fff"/><rect x="63" y="686" width="4" height="4" fill="#fff"/><rect x="63" y="691" width="4" height="4" fill="#fff"/><rect x="63" y="696" width="4" height="4" fill="#fff"/><rect x="68" y="681" width="4" height="4" fill="#fff"/><rect x="68" y="686" width="4" height="4" fill="#fff"/><rect x="68" y="691" width="4" height="4" fill="#fff"/><rect x="68" y="696" width="4" height="4" fill="#fff"/><rect x="73" y="681" width="4" height="4" fill="#fff"/><rect x="73" y="686" width="4" height="4" fill="#fff"/><rect x="73" y="691" width="4" height="4" fill="#fff"/><rect x="73" y="696" width="4" height="4" fill="#fff"/><rect x="57" y="681" width="6" height="20" fill="#fff"/><rect x="58" y="681" width="4" height="4.2" fill="#f0a058"/><rect x="58" y="686" width="4" height="4.2" fill="#f0a058"/><rect x="58" y="691" width="4" height="4.2" fill="#f0a058"/><rect x="58" y="696" width="4" height="4.2" fill="#f0a058"/></svg>
<svg style="position:absolute;left:84px;top:712px" width="34" height="18" viewBox="84 712 34 18"><rect x="87.2" y="715.1" width="25.7" height="9.7" fill="#fff" stroke="#4b82be" stroke-width="2"/><path d="M89.3 717.6 H91.7 M90.5 717.6 V722.4 M89.3 722.4 H91.7" stroke="#7a7a7a" stroke-width="0.9"/></svg>
<svg style="position:absolute;left:84px;top:744px" width="34" height="18" viewBox="84 744 34 18"><rect x="87.2" y="747.1" width="25.7" height="9.7" fill="#fff" stroke="#4b82be" stroke-width="2"/><path d="M89.3 749.6 H91.7 M90.5 749.6 V754.4 M89.3 754.4 H91.7" stroke="#7a7a7a" stroke-width="0.9"/></svg>
<svg style="position:absolute;left:84px;top:776px" width="34" height="18" viewBox="84 776 34 18"><rect x="87.2" y="779.1" width="25.7" height="9.7" fill="#fff" stroke="#4b82be" stroke-width="2"/><path d="M89.3 781.6 H91.7 M90.5 781.6 V786.4 M89.3 786.4 H91.7" stroke="#7a7a7a" stroke-width="0.9"/></svg>
<svg style="position:absolute;left:84px;top:808px" width="34" height="18" viewBox="84 808 34 18"><rect x="87.2" y="811.1" width="25.7" height="9.7" fill="#fff" stroke="#4b82be" stroke-width="2"/><path d="M89.3 813.6 H91.7 M90.5 813.6 V818.4 M89.3 818.4 H91.7" stroke="#7a7a7a" stroke-width="0.9"/></svg>
<svg style="position:absolute;left:51px;top:835px" width="29" height="28" viewBox="51 835 29 28"><path d="M52 841 V837.5 Q52 836 53.5 836 H76.5 Q78 836 78 837.5 V841 Z" fill="#7f7f7f"/><rect x="52" y="840" width="26" height="21" fill="#7f7f7f"/><rect x="53" y="841" width="4" height="4" fill="#fff"/><rect x="53" y="846" width="4" height="4" fill="#fff"/><rect x="53" y="851" width="4" height="4" fill="#fff"/><rect x="53" y="856" width="4" height="4" fill="#fff"/><rect x="58" y="841" width="4" height="4" fill="#fff"/><rect x="58" y="846" width="4" height="4" fill="#fff"/><rect x="58" y="851" width="4" height="4" fill="#fff"/><rect x="58" y="856" width="4" height="4" fill="#fff"/><rect x="63" y="841" width="4" height="4" fill="#fff"/><rect x="63" y="846" width="4" height="4" fill="#fff"/><rect x="63" y="851" width="4" height="4" fill="#fff"/><rect x="63" y="856" width="4" height="4" fill="#fff"/><rect x="68" y="841" width="4" height="4" fill="#fff"/><rect x="68" y="846" width="4" height="4" fill="#fff"/><rect x="68" y="851" width="4" height="4" fill="#fff"/><rect x="68" y="856" width="4" height="4" fill="#fff"/><rect x="73" y="841" width="4" height="4" fill="#fff"/><rect x="73" y="846" width="4" height="4" fill="#fff"/><rect x="73" y="851" width="4" height="4" fill="#fff"/><rect x="73" y="856" width="4" height="4" fill="#fff"/></svg>
<svg style="position:absolute;left:86px;top:867px" width="29" height="28" viewBox="86 867 29 28"><path d="M87 873 V869.5 Q87 868 88.5 868 H111.5 Q113 868 113 869.5 V873 Z" fill="#7f7f7f"/><rect x="87" y="872" width="26" height="21" fill="#7f7f7f"/><rect x="88" y="873" width="4" height="4" fill="#fff"/><rect x="88" y="878" width="4" height="4" fill="#fff"/><rect x="88" y="883" width="4" height="4" fill="#fff"/><rect x="88" y="888" width="4" height="4" fill="#fff"/><rect x="93" y="873" width="4" height="4" fill="#fff"/><rect x="93" y="878" width="4" height="4" fill="#fff"/><rect x="93" y="883" width="4" height="4" fill="#fff"/><rect x="93" y="888" width="4" height="4" fill="#fff"/><rect x="98" y="873" width="4" height="4" fill="#fff"/><rect x="98" y="878" width="4" height="4" fill="#fff"/><rect x="98" y="883" width="4" height="4" fill="#fff"/><rect x="98" y="888" width="4" height="4" fill="#fff"/><rect x="103" y="873" width="4" height="4" fill="#fff"/><rect x="103" y="878" width="4" height="4" fill="#fff"/><rect x="103" y="883" width="4" height="4" fill="#fff"/><rect x="103" y="888" width="4" height="4" fill="#fff"/><rect x="108" y="873" width="4" height="4" fill="#fff"/><rect x="108" y="878" width="4" height="4" fill="#fff"/><rect x="108" y="883" width="4" height="4" fill="#fff"/><rect x="108" y="888" width="4" height="4" fill="#fff"/></svg>
<div style="position:absolute;left:84px;top:672px;width:114px;height:32px;background:#0078d7;box-sizing:border-box;border:1px dotted #1a1a1a;"></div>
<div style="position:absolute;left:11px;top:352px;width:531px;height:966px;overflow:hidden">
<div class="t" style="left:40.3px;top:8.52px;font-size:17.7px;line-height:17.7px;color:#000000;">System fields</div>
<div class="t" style="left:74.7px;top:40.52px;font-size:17.7px;line-height:17.7px;color:#000000;">Source: M:\DATASETS\TRAIN-BEST\SampleDocs\Dinvir Investments</div>
<div class="t" style="left:74.7px;top:72.52px;font-size:17.7px;line-height:17.7px;color:#000000;transform-origin:0 0;transform:scaleX(0.945);">TemplateName: TESTING INVESTMENTS T/A</div>
<div class="t" style="left:74.7px;top:104.52px;font-size:17.7px;line-height:17.7px;color:#000000;">TemplateId: A2B949C5-57D7-4A66-84CC-7A01274C2E89</div>
<div class="t" style="left:40.3px;top:136.52px;font-size:17.7px;line-height:17.7px;color:#000000;">Data extracted</div>
<div class="t" style="left:74.7px;top:168.52px;font-size:17.7px;line-height:17.7px;color:#000000;">Template detection OK</div>
<div class="t" style="left:74.7px;top:200.52px;font-size:17.7px;line-height:17.7px;color:#000000;">Found: Date Ref Description Debit Credit Balance</div>
<div class="t" style="left:74.7px;top:232.52px;font-size:17.7px;line-height:17.7px;color:#000000;">Found: Date Ref Description Debit Credit Balance</div>
<div class="t" style="left:74.7px;top:264.52px;font-size:17.7px;line-height:17.7px;color:#000000;transform-origin:0 0;transform:scaleX(0.975);">Found: DINVIR INVESTMENTS T/A ALPINE 1991/005747/07</div>
<div class="t" style="left:74.7px;top:296.52px;font-size:17.7px;line-height:17.7px;color:#000000;transform-origin:0 0;transform:scaleX(0.975);">Found: DINVIR INVESTMENTS T/A ALPINE 1991/005747/07</div>
<div class="t" style="left:74.7px;top:328.52px;font-size:17.7px;line-height:17.7px;color:#ffffff;">4 fields found</div>
<div class="t" style="left:109.3px;top:360.52px;font-size:17.7px;line-height:17.7px;color:#000000;">[1][Date_]=[03-10-2014]</div>
<div class="t" style="left:109.3px;top:392.52px;font-size:17.7px;line-height:17.7px;color:#000000;">[1][Account_]=[CBG02]</div>
<div class="t" style="left:109.3px;top:424.52px;font-size:17.7px;line-height:17.7px;color:#000000;">[5][Current]=[120,414.40]</div>
<div class="t" style="left:109.3px;top:456.52px;font-size:17.7px;line-height:17.7px;color:#000000;">[5][Total]=[706,590.10]</div>
<div class="t" style="left:74.7px;top:488.52px;font-size:17.7px;line-height:17.7px;color:#000000;">1 tables read</div>
<div class="t" style="left:109.3px;top:520.52px;font-size:17.7px;line-height:17.7px;color:#000000;">Default table (145 rows)</div>
</div>
<div style="position:absolute;left:548px;top:304px;width:2022px;height:2px;background:#6d6d6d;"></div>
<div style="position:absolute;left:548px;top:304px;width:2px;height:1037px;background:#6d6d6d;"></div>
<div style="position:absolute;left:2569px;top:304px;width:2px;height:1039px;background:#e4e4e4;"></div>
<div style="position:absolute;left:550px;top:306px;width:2019px;height:517px;background:#ffffff;"></div>
<div style="position:absolute;left:550px;top:306px;width:2019px;height:29px;background:#f0f0f0;"></div>
<div style="position:absolute;left:550px;top:335px;width:2019px;height:1px;background:#a0a0a0;"></div>
<div style="position:absolute;left:973px;top:306px;width:1px;height:29px;background:#d6d6d6;"></div>
<div style="position:absolute;left:1371px;top:306px;width:1px;height:29px;background:#d6d6d6;"></div>
<div style="position:absolute;left:1769px;top:306px;width:1px;height:29px;background:#d6d6d6;"></div>
<div style="position:absolute;left:2167px;top:306px;width:1px;height:29px;background:#d6d6d6;"></div>
<div class="t" style="left:583px;top:314.46px;font-size:16px;line-height:16px;color:#000;">Extracted item</div>
<div class="t" style="left:981px;top:314.46px;font-size:16px;line-height:16px;color:#000;">Export name</div>
<div class="t" style="left:1379px;top:314.46px;font-size:16px;line-height:16px;color:#000;">Data type</div>
<div class="t" style="left:1777px;top:314.46px;font-size:16px;line-height:16px;color:#000;">Join mode</div>
<div class="t" style="left:2175px;top:314.46px;font-size:16px;line-height:16px;color:#000;">OnError</div>
<div style="position:absolute;left:550px;top:336px;width:26px;height:261px;background:#f0f0f0;"></div>
<div style="position:absolute;left:577px;top:362px;width:1992px;height:1px;background:#e8e8e8;"></div>
<div class="t" style="left:581.5px;top:341.66px;font-size:16px;line-height:16px;color:#000;">fld.Date_</div>
<div class="t" style="left:979.5px;top:341.66px;font-size:16px;line-height:16px;color:#000;">StatementDate</div>
<div class="t" style="left:1377.5px;top:341.66px;font-size:16px;line-height:16px;color:#000;">date</div>
<div class="t" style="left:1775.5px;top:341.66px;font-size:16px;line-height:16px;color:#000;">01: Add as a detail for all items</div>
<div class="t" style="left:2173.5px;top:341.66px;font-size:16px;line-height:16px;color:#000;">Ignore value</div>
<div style="position:absolute;left:577px;top:388px;width:1992px;height:1px;background:#e8e8e8;"></div>
<div class="t" style="left:581.5px;top:367.66px;font-size:16px;line-height:16px;color:#000;">fld.Account_</div>
<div class="t" style="left:979.5px;top:367.66px;font-size:16px;line-height:16px;color:#000;">StatementAccount</div>
<div class="t" style="left:1377.5px;top:367.66px;font-size:16px;line-height:16px;color:#000;">string</div>
<div class="t" style="left:1775.5px;top:367.66px;font-size:16px;line-height:16px;color:#000;">01: Add as a detail for all items</div>
<div class="t" style="left:2173.5px;top:367.66px;font-size:16px;line-height:16px;color:#000;">Ignore value</div>
<div style="position:absolute;left:577px;top:414px;width:1992px;height:1px;background:#e8e8e8;"></div>
<div class="t" style="left:581.5px;top:393.66px;font-size:16px;line-height:16px;color:#000;">fld.Current</div>
<div class="t" style="left:979.5px;top:393.66px;font-size:16px;line-height:16px;color:#000;">Current</div>
<div class="t" style="left:1377.5px;top:393.66px;font-size:16px;line-height:16px;color:#000;">amount</div>
<div class="t" style="left:1775.5px;top:393.66px;font-size:16px;line-height:16px;color:#000;">05: Don't export this item</div>
<div class="t" style="left:2173.5px;top:393.66px;font-size:16px;line-height:16px;color:#000;">Ignore value</div>
<div style="position:absolute;left:577px;top:440px;width:1992px;height:1px;background:#e8e8e8;"></div>
<div class="t" style="left:581.5px;top:419.66px;font-size:16px;line-height:16px;color:#000;">fld.Total</div>
<div class="t" style="left:979.5px;top:419.66px;font-size:16px;line-height:16px;color:#000;">Total</div>
<div class="t" style="left:1377.5px;top:419.66px;font-size:16px;line-height:16px;color:#000;">amount</div>
<div class="t" style="left:1775.5px;top:419.66px;font-size:16px;line-height:16px;color:#000;">05: Don't export this item</div>
<div class="t" style="left:2173.5px;top:419.66px;font-size:16px;line-height:16px;color:#000;">Ignore value</div>
<div style="position:absolute;left:577px;top:466px;width:1992px;height:1px;background:#e8e8e8;"></div>
<div class="t" style="left:581.5px;top:445.66px;font-size:16px;line-height:16px;color:#000;">Default table.Line.Date</div>
<div class="t" style="left:979.5px;top:445.66px;font-size:16px;line-height:16px;color:#000;">TransactionDate</div>
<div class="t" style="left:1377.5px;top:445.66px;font-size:16px;line-height:16px;color:#000;">date</div>
<div class="t" style="left:1775.5px;top:445.66px;font-size:16px;line-height:16px;color:#000;">06: Add as line item</div>
<div class="t" style="left:2173.5px;top:445.66px;font-size:16px;line-height:16px;color:#000;">Ignore value</div>
<div style="position:absolute;left:577px;top:492px;width:1992px;height:1px;background:#e8e8e8;"></div>
<div class="t" style="left:581.5px;top:471.66px;font-size:16px;line-height:16px;color:#000;">Default table.Line.Ref</div>
<div class="t" style="left:979.5px;top:471.66px;font-size:16px;line-height:16px;color:#000;">TransactionRef</div>
<div class="t" style="left:1377.5px;top:471.66px;font-size:16px;line-height:16px;color:#000;">string</div>
<div class="t" style="left:1775.5px;top:471.66px;font-size:16px;line-height:16px;color:#000;">06: Add as line item</div>
<div class="t" style="left:2173.5px;top:471.66px;font-size:16px;line-height:16px;color:#000;">Ignore value</div>
<div style="position:absolute;left:577px;top:518px;width:1992px;height:1px;background:#e8e8e8;"></div>
<div class="t" style="left:581.5px;top:497.66px;font-size:16px;line-height:16px;color:#000;">Default table.Line.Description</div>
<div class="t" style="left:979.5px;top:497.66px;font-size:16px;line-height:16px;color:#000;">TransactionDescription</div>
<div class="t" style="left:1377.5px;top:497.66px;font-size:16px;line-height:16px;color:#000;">string</div>
<div class="t" style="left:1775.5px;top:497.66px;font-size:16px;line-height:16px;color:#000;">06: Add as line item</div>
<div class="t" style="left:2173.5px;top:497.66px;font-size:16px;line-height:16px;color:#000;">Ignore value</div>
<div style="position:absolute;left:577px;top:544px;width:1992px;height:1px;background:#e8e8e8;"></div>
<div class="t" style="left:581.5px;top:523.66px;font-size:16px;line-height:16px;color:#000;">Default table.Line.Debit</div>
<div class="t" style="left:979.5px;top:523.66px;font-size:16px;line-height:16px;color:#000;">TransactionDebit</div>
<div class="t" style="left:1377.5px;top:523.66px;font-size:16px;line-height:16px;color:#000;">amount</div>
<div class="t" style="left:1775.5px;top:523.66px;font-size:16px;line-height:16px;color:#000;">06: Add as line item</div>
<div class="t" style="left:2173.5px;top:523.66px;font-size:16px;line-height:16px;color:#000;">Ignore value</div>
<div style="position:absolute;left:577px;top:570px;width:1992px;height:1px;background:#e8e8e8;"></div>
<div class="t" style="left:581.5px;top:549.66px;font-size:16px;line-height:16px;color:#000;">Default table.Line.Credit</div>
<div class="t" style="left:979.5px;top:549.66px;font-size:16px;line-height:16px;color:#000;">TransactionCredit</div>
<div class="t" style="left:1377.5px;top:549.66px;font-size:16px;line-height:16px;color:#000;">amount</div>
<div class="t" style="left:1775.5px;top:549.66px;font-size:16px;line-height:16px;color:#000;">06: Add as line item</div>
<div class="t" style="left:2173.5px;top:549.66px;font-size:16px;line-height:16px;color:#000;">Ignore value</div>
<div style="position:absolute;left:577px;top:596px;width:1992px;height:1px;background:#e8e8e8;"></div>
<div class="t" style="left:581.5px;top:575.66px;font-size:16px;line-height:16px;color:#000;">Default table.Line.Balance</div>
<div class="t" style="left:979.5px;top:575.66px;font-size:16px;line-height:16px;color:#000;">TransactionBalance</div>
<div class="t" style="left:1377.5px;top:575.66px;font-size:16px;line-height:16px;color:#000;">amount</div>
<div class="t" style="left:1775.5px;top:575.66px;font-size:16px;line-height:16px;color:#000;">06: Add as line item</div>
<div class="t" style="left:2173.5px;top:575.66px;font-size:16px;line-height:16px;color:#000;">Ignore value</div>
<div style="position:absolute;left:974px;top:336px;width:1px;height:261px;background:#ececec;"></div>
<div style="position:absolute;left:1372px;top:336px;width:1px;height:261px;background:#ececec;"></div>
<div style="position:absolute;left:1770px;top:336px;width:1px;height:261px;background:#ececec;"></div>
<div style="position:absolute;left:2168px;top:336px;width:1px;height:261px;background:#ececec;"></div>
<div style="position:absolute;left:550px;top:823px;width:1993px;height:1px;background:#a8a8a8;"></div>
<div style="position:absolute;left:550px;top:824px;width:1993px;height:28px;background:#f0f0f0;"></div>
<div style="position:absolute;left:550px;top:852px;width:1993px;height:1px;background:#a0a0a0;"></div>
<div style="position:absolute;left:2542px;top:824px;width:1px;height:29px;background:#c8c8c8;"></div>
<div style="position:absolute;left:798px;top:824px;width:1px;height:28px;background:#d6d6d6;"></div>
<div style="position:absolute;left:1047px;top:824px;width:1px;height:28px;background:#d6d6d6;"></div>
<div style="position:absolute;left:1296px;top:824px;width:1px;height:28px;background:#d6d6d6;"></div>
<div style="position:absolute;left:1545px;top:824px;width:1px;height:28px;background:#d6d6d6;"></div>
<div style="position:absolute;left:1794px;top:824px;width:1px;height:28px;background:#d6d6d6;"></div>
<div style="position:absolute;left:2043px;top:824px;width:1px;height:28px;background:#d6d6d6;"></div>
<div style="position:absolute;left:2292px;top:824px;width:1px;height:28px;background:#d6d6d6;"></div>
<div class="t" style="left:557.5px;top:831.26px;font-size:16px;line-height:16px;color:#000;">StatementDate</div>
<div class="t" style="left:806.5px;top:831.26px;font-size:16px;line-height:16px;color:#000;">StatementAccount</div>
<div class="t" style="left:1055.5px;top:831.26px;font-size:16px;line-height:16px;color:#000;">TransactionDate</div>
<div class="t" style="left:1304.5px;top:831.26px;font-size:16px;line-height:16px;color:#000;">TransactionRef</div>
<div class="t" style="left:1553.5px;top:831.26px;font-size:16px;line-height:16px;color:#000;">TransactionDescription</div>
<div class="t" style="left:1802.5px;top:831.26px;font-size:16px;line-height:16px;color:#000;">TransactionDebit</div>
<div class="t" style="left:2051.5px;top:831.26px;font-size:16px;line-height:16px;color:#000;">TransactionCredit</div>
<div class="t" style="left:2300.5px;top:831.26px;font-size:16px;line-height:16px;color:#000;">TransactionBalance</div>
<div style="position:absolute;left:550px;top:853px;width:1993px;height:487px;overflow:hidden;background:#ffffff">
<div style="position:absolute;left:1px;top:1px;width:1992px;height:25px;background:#90ee90;"></div>
<div class="t" style="left:5.5px;top:5.96px;font-size:16px;line-height:16px;color:#000;">2014-10-03 (03-10-2014)</div>
<div class="t" style="left:254.5px;top:5.96px;font-size:16px;line-height:16px;color:#000;">CBG02</div>
<div class="t" style="left:503.5px;top:5.96px;font-size:16px;line-height:16px;color:#000;">2014-09-01 (01-09-2014)</div>
<div class="t" style="left:752.5px;top:5.96px;font-size:16px;line-height:16px;color:#000;">REC 17591</div>
<div class="t" style="left:1001.5px;top:5.96px;font-size:16px;line-height:16px;color:#000;">Payment</div>
<div class="t" style="left:1250.5px;top:5.96px;font-size:16px;line-height:16px;color:#000;">0.00 (0.0)</div>
<div class="t" style="left:1499.5px;top:5.96px;font-size:16px;line-height:16px;color:#000;">75221.24 (75,221.24)</div>
<div class="t" style="left:1748.5px;top:5.96px;font-size:16px;line-height:16px;color:#000;">1396677.65 (1,396,677.65)</div>
<div style="position:absolute;left:1px;top:27px;width:1992px;height:25px;background:#90ee90;"></div>
<div class="t" style="left:5.5px;top:31.96px;font-size:16px;line-height:16px;color:#000;">2014-10-03 (03-10-2014)</div>
<div class="t" style="left:254.5px;top:31.96px;font-size:16px;line-height:16px;color:#000;">CBG02</div>
<div class="t" style="left:503.5px;top:31.96px;font-size:16px;line-height:16px;color:#000;">2014-09-03 (03-09-2014)</div>
<div class="t" style="left:752.5px;top:31.96px;font-size:16px;line-height:16px;color:#000;">01-3144</div>
<div class="t" style="left:1001.5px;top:31.96px;font-size:16px;line-height:16px;color:#000;">Credit Note</div>
<div class="t" style="left:1250.5px;top:31.96px;font-size:16px;line-height:16px;color:#000;">0.00 (0.0)</div>
<div class="t" style="left:1499.5px;top:31.96px;font-size:16px;line-height:16px;color:#000;">2077.94 (2,077.94)</div>
<div class="t" style="left:1748.5px;top:31.96px;font-size:16px;line-height:16px;color:#000;">1394599.71 (1,394,599.71)</div>
<div style="position:absolute;left:1px;top:53px;width:1992px;height:25px;background:#90ee90;"></div>
<div class="t" style="left:5.5px;top:57.96px;font-size:16px;line-height:16px;color:#000;">2014-10-03 (03-10-2014)</div>
<div class="t" style="left:254.5px;top:57.96px;font-size:16px;line-height:16px;color:#000;">CBG02</div>
<div class="t" style="left:503.5px;top:57.96px;font-size:16px;line-height:16px;color:#000;">2014-09-03 (03-09-2014)</div>
<div class="t" style="left:752.5px;top:57.96px;font-size:16px;line-height:16px;color:#000;">01-3146</div>
<div class="t" style="left:1001.5px;top:57.96px;font-size:16px;line-height:16px;color:#000;">Credit Note</div>
<div class="t" style="left:1250.5px;top:57.96px;font-size:16px;line-height:16px;color:#000;">0.00 (0.0)</div>
<div class="t" style="left:1499.5px;top:57.96px;font-size:16px;line-height:16px;color:#000;">5818.22 (5,818.22)</div>
<div class="t" style="left:1748.5px;top:57.96px;font-size:16px;line-height:16px;color:#000;">1388781.49 (1,388,781.49)</div>
<div style="position:absolute;left:1px;top:79px;width:1992px;height:25px;background:#90ee90;"></div>
<div class="t" style="left:5.5px;top:83.96px;font-size:16px;line-height:16px;color:#000;">2014-10-03 (03-10-2014)</div>
<div class="t" style="left:254.5px;top:83.96px;font-size:16px;line-height:16px;color:#000;">CBG02</div>
<div class="t" style="left:503.5px;top:83.96px;font-size:16px;line-height:16px;color:#000;">2014-09-01 (01-09-2014)</div>
<div class="t" style="left:752.5px;top:83.96px;font-size:16px;line-height:16px;color:#000;">REC 17591</div>
<div class="t" style="left:1001.5px;top:83.96px;font-size:16px;line-height:16px;color:#000;">Payment</div>
<div class="t" style="left:1250.5px;top:83.96px;font-size:16px;line-height:16px;color:#000;">0.00 (0.0)</div>
<div class="t" style="left:1499.5px;top:83.96px;font-size:16px;line-height:16px;color:#000;">62407.09 (62,407.09)</div>
<div class="t" style="left:1748.5px;top:83.96px;font-size:16px;line-height:16px;color:#000;">1326374.40 (1,326,374.40)</div>
<div style="position:absolute;left:1px;top:105px;width:1992px;height:25px;background:#90ee90;"></div>
<div class="t" style="left:5.5px;top:109.96px;font-size:16px;line-height:16px;color:#000;">2014-10-03 (03-10-2014)</div>
<div class="t" style="left:254.5px;top:109.96px;font-size:16px;line-height:16px;color:#000;">CBG02</div>
<div class="t" style="left:503.5px;top:109.96px;font-size:16px;line-height:16px;color:#000;">2014-09-03 (03-09-2014)</div>
<div class="t" style="left:752.5px;top:109.96px;font-size:16px;line-height:16px;color:#000;">01-3144</div>
<div class="t" style="left:1001.5px;top:109.96px;font-size:16px;line-height:16px;color:#000;">Credit Note</div>
<div class="t" style="left:1250.5px;top:109.96px;font-size:16px;line-height:16px;color:#000;">0.00 (0.0)</div>
<div class="t" style="left:1499.5px;top:109.96px;font-size:16px;line-height:16px;color:#000;">1723.95 (1,723.95)</div>
<div class="t" style="left:1748.5px;top:109.96px;font-size:16px;line-height:16px;color:#000;">1324650.45 (1,324,650.45)</div>
<div style="position:absolute;left:1px;top:131px;width:1992px;height:25px;background:#90ee90;"></div>
<div class="t" style="left:5.5px;top:135.96px;font-size:16px;line-height:16px;color:#000;">2014-10-03 (03-10-2014)</div>
<div class="t" style="left:254.5px;top:135.96px;font-size:16px;line-height:16px;color:#000;">CBG02</div>
<div class="t" style="left:503.5px;top:135.96px;font-size:16px;line-height:16px;color:#000;">2014-09-03 (03-09-2014)</div>
<div class="t" style="left:752.5px;top:135.96px;font-size:16px;line-height:16px;color:#000;">01-3146</div>
<div class="t" style="left:1001.5px;top:135.96px;font-size:16px;line-height:16px;color:#000;">Credit Note</div>
<div class="t" style="left:1250.5px;top:135.96px;font-size:16px;line-height:16px;color:#000;">0.00 (0.0)</div>
<div class="t" style="left:1499.5px;top:135.96px;font-size:16px;line-height:16px;color:#000;">4827.07 (4,827.07)</div>
<div class="t" style="left:1748.5px;top:135.96px;font-size:16px;line-height:16px;color:#000;">1319823.38 (1,319,823.38)</div>
<div style="position:absolute;left:1px;top:157px;width:1992px;height:25px;background:#90ee90;"></div>
<div class="t" style="left:5.5px;top:161.96px;font-size:16px;line-height:16px;color:#000;">2014-10-03 (03-10-2014)</div>
<div class="t" style="left:254.5px;top:161.96px;font-size:16px;line-height:16px;color:#000;">CBG02</div>
<div class="t" style="left:503.5px;top:161.96px;font-size:16px;line-height:16px;color:#000;">2014-09-01 (01-09-2014)</div>
<div class="t" style="left:752.5px;top:161.96px;font-size:16px;line-height:16px;color:#000;">REC 17591</div>
<div class="t" style="left:1001.5px;top:161.96px;font-size:16px;line-height:16px;color:#000;">Payment</div>
<div class="t" style="left:1250.5px;top:161.96px;font-size:16px;line-height:16px;color:#000;">0.00 (0.0)</div>
<div class="t" style="left:1499.5px;top:161.96px;font-size:16px;line-height:16px;color:#000;">60174.54 (60,174.54)</div>
<div class="t" style="left:1748.5px;top:161.96px;font-size:16px;line-height:16px;color:#000;">1259648.84 (1,259,648.84)</div>
<div style="position:absolute;left:1px;top:183px;width:1992px;height:25px;background:#90ee90;"></div>
<div class="t" style="left:5.5px;top:187.96px;font-size:16px;line-height:16px;color:#000;">2014-10-03 (03-10-2014)</div>
<div class="t" style="left:254.5px;top:187.96px;font-size:16px;line-height:16px;color:#000;">CBG02</div>
<div class="t" style="left:503.5px;top:187.96px;font-size:16px;line-height:16px;color:#000;">2014-09-03 (03-09-2014)</div>
<div class="t" style="left:752.5px;top:187.96px;font-size:16px;line-height:16px;color:#000;">01-3144</div>
<div class="t" style="left:1001.5px;top:187.96px;font-size:16px;line-height:16px;color:#000;">Credit Note</div>
<div class="t" style="left:1250.5px;top:187.96px;font-size:16px;line-height:16px;color:#000;">0.00 (0.0)</div>
<div class="t" style="left:1499.5px;top:187.96px;font-size:16px;line-height:16px;color:#000;">1662.28 (1,662.28)</div>
<div class="t" style="left:1748.5px;top:187.96px;font-size:16px;line-height:16px;color:#000;">1257986.56 (1,257,986.56)</div>
<div style="position:absolute;left:1px;top:209px;width:1992px;height:25px;background:#90ee90;"></div>
<div class="t" style="left:5.5px;top:213.96px;font-size:16px;line-height:16px;color:#000;">2014-10-03 (03-10-2014)</div>
<div class="t" style="left:254.5px;top:213.96px;font-size:16px;line-height:16px;color:#000;">CBG02</div>
<div class="t" style="left:503.5px;top:213.96px;font-size:16px;line-height:16px;color:#000;">2014-09-03 (03-09-2014)</div>
<div class="t" style="left:752.5px;top:213.96px;font-size:16px;line-height:16px;color:#000;">01-3146</div>
<div class="t" style="left:1001.5px;top:213.96px;font-size:16px;line-height:16px;color:#000;">Credit Note</div>
<div class="t" style="left:1250.5px;top:213.96px;font-size:16px;line-height:16px;color:#000;">0.00 (0.0)</div>
<div class="t" style="left:1499.5px;top:213.96px;font-size:16px;line-height:16px;color:#000;">4654.38 (4,654.38)</div>
<div class="t" style="left:1748.5px;top:213.96px;font-size:16px;line-height:16px;color:#000;">1253332.18 (1,253,332.18)</div>
<div style="position:absolute;left:1px;top:235px;width:1992px;height:25px;background:#90ee90;"></div>
<div class="t" style="left:5.5px;top:239.96px;font-size:16px;line-height:16px;color:#000;">2014-10-03 (03-10-2014)</div>
<div class="t" style="left:254.5px;top:239.96px;font-size:16px;line-height:16px;color:#000;">CBG02</div>
<div class="t" style="left:503.5px;top:239.96px;font-size:16px;line-height:16px;color:#000;">2014-09-01 (01-09-2014)</div>
<div class="t" style="left:752.5px;top:239.96px;font-size:16px;line-height:16px;color:#000;">REC 17591</div>
<div class="t" style="left:1001.5px;top:239.96px;font-size:16px;line-height:16px;color:#000;">Payment</div>
<div class="t" style="left:1250.5px;top:239.96px;font-size:16px;line-height:16px;color:#000;">0.00 (0.0)</div>
<div class="t" style="left:1499.5px;top:239.96px;font-size:16px;line-height:16px;color:#000;">81264.15 (81,264.15)</div>
<div class="t" style="left:1748.5px;top:239.96px;font-size:16px;line-height:16px;color:#000;">1172068.03 (1,172,068.03)</div>
<div style="position:absolute;left:1px;top:261px;width:1992px;height:25px;background:#90ee90;"></div>
<div class="t" style="left:5.5px;top:265.96px;font-size:16px;line-height:16px;color:#000;">2014-10-03 (03-10-2014)</div>
<div class="t" style="left:254.5px;top:265.96px;font-size:16px;line-height:16px;color:#000;">CBG02</div>
<div class="t" style="left:503.5px;top:265.96px;font-size:16px;line-height:16px;color:#000;">2014-09-03 (03-09-2014)</div>
<div class="t" style="left:752.5px;top:265.96px;font-size:16px;line-height:16px;color:#000;">01-3144</div>
<div class="t" style="left:1001.5px;top:265.96px;font-size:16px;line-height:16px;color:#000;">Credit Note</div>
<div class="t" style="left:1250.5px;top:265.96px;font-size:16px;line-height:16px;color:#000;">0.00 (0.0)</div>
<div class="t" style="left:1499.5px;top:265.96px;font-size:16px;line-height:16px;color:#000;">2246.92 (2,246.92)</div>
<div class="t" style="left:1748.5px;top:265.96px;font-size:16px;line-height:16px;color:#000;">1169821.11 (1,169,821.11)</div>
<div style="position:absolute;left:1px;top:287px;width:1992px;height:25px;background:#90ee90;"></div>
<div class="t" style="left:5.5px;top:291.96px;font-size:16px;line-height:16px;color:#000;">2014-10-03 (03-10-2014)</div>
<div class="t" style="left:254.5px;top:291.96px;font-size:16px;line-height:16px;color:#000;">CBG02</div>
<div class="t" style="left:503.5px;top:291.96px;font-size:16px;line-height:16px;color:#000;">2014-09-03 (03-09-2014)</div>
<div class="t" style="left:752.5px;top:291.96px;font-size:16px;line-height:16px;color:#000;">01-3146</div>
<div class="t" style="left:1001.5px;top:291.96px;font-size:16px;line-height:16px;color:#000;">Credit Note</div>
<div class="t" style="left:1250.5px;top:291.96px;font-size:16px;line-height:16px;color:#000;">0.00 (0.0)</div>
<div class="t" style="left:1499.5px;top:291.96px;font-size:16px;line-height:16px;color:#000;">6285.78 (6,285.78)</div>
<div class="t" style="left:1748.5px;top:291.96px;font-size:16px;line-height:16px;color:#000;">1163535.33 (1,163,535.33)</div>
<div style="position:absolute;left:1px;top:313px;width:1992px;height:25px;background:#90ee90;"></div>
<div class="t" style="left:5.5px;top:317.96px;font-size:16px;line-height:16px;color:#000;">2014-10-03 (03-10-2014)</div>
<div class="t" style="left:254.5px;top:317.96px;font-size:16px;line-height:16px;color:#000;">CBG02</div>
<div class="t" style="left:503.5px;top:317.96px;font-size:16px;line-height:16px;color:#000;">2014-09-01 (01-09-2014)</div>
<div class="t" style="left:752.5px;top:317.96px;font-size:16px;line-height:16px;color:#000;">REC 17591</div>
<div class="t" style="left:1001.5px;top:317.96px;font-size:16px;line-height:16px;color:#000;">Payment</div>
<div class="t" style="left:1250.5px;top:317.96px;font-size:16px;line-height:16px;color:#000;">0.00 (0.0)</div>
<div class="t" style="left:1499.5px;top:317.96px;font-size:16px;line-height:16px;color:#000;">24675.68 (24,675.68)</div>
<div class="t" style="left:1748.5px;top:317.96px;font-size:16px;line-height:16px;color:#000;">1138859.65 (1,138,859.65)</div>
<div style="position:absolute;left:1px;top:339px;width:1992px;height:25px;background:#90ee90;"></div>
<div class="t" style="left:5.5px;top:343.96px;font-size:16px;line-height:16px;color:#000;">2014-10-03 (03-10-2014)</div>
<div class="t" style="left:254.5px;top:343.96px;font-size:16px;line-height:16px;color:#000;">CBG02</div>
<div class="t" style="left:503.5px;top:343.96px;font-size:16px;line-height:16px;color:#000;">2014-09-03 (03-09-2014)</div>
<div class="t" style="left:752.5px;top:343.96px;font-size:16px;line-height:16px;color:#000;">01-3144</div>
<div class="t" style="left:1001.5px;top:343.96px;font-size:16px;line-height:16px;color:#000;">Credit Note</div>
<div class="t" style="left:1250.5px;top:343.96px;font-size:16px;line-height:16px;color:#000;">0.00 (0.0)</div>
<div class="t" style="left:1499.5px;top:343.96px;font-size:16px;line-height:16px;color:#000;">681.65 (681.65)</div>
<div class="t" style="left:1748.5px;top:343.96px;font-size:16px;line-height:16px;color:#000;">1138178.00 (1,138,178.00)</div>
<div style="position:absolute;left:1px;top:365px;width:1992px;height:25px;background:#90ee90;"></div>
<div class="t" style="left:5.5px;top:369.96px;font-size:16px;line-height:16px;color:#000;">2014-10-03 (03-10-2014)</div>
<div class="t" style="left:254.5px;top:369.96px;font-size:16px;line-height:16px;color:#000;">CBG02</div>
<div class="t" style="left:503.5px;top:369.96px;font-size:16px;line-height:16px;color:#000;">2014-09-03 (03-09-2014)</div>
<div class="t" style="left:752.5px;top:369.96px;font-size:16px;line-height:16px;color:#000;">01-3146</div>
<div class="t" style="left:1001.5px;top:369.96px;font-size:16px;line-height:16px;color:#000;">Credit Note</div>
<div class="t" style="left:1250.5px;top:369.96px;font-size:16px;line-height:16px;color:#000;">0.00 (0.0)</div>
<div class="t" style="left:1499.5px;top:369.96px;font-size:16px;line-height:16px;color:#000;">1908.62 (1,908.62)</div>
<div class="t" style="left:1748.5px;top:369.96px;font-size:16px;line-height:16px;color:#000;">1136269.38 (1,136,269.38)</div>
<div style="position:absolute;left:1px;top:391px;width:1992px;height:25px;background:#90ee90;"></div>
<div class="t" style="left:5.5px;top:395.96px;font-size:16px;line-height:16px;color:#000;">2014-10-03 (03-10-2014)</div>
<div class="t" style="left:254.5px;top:395.96px;font-size:16px;line-height:16px;color:#000;">CBG02</div>
<div class="t" style="left:503.5px;top:395.96px;font-size:16px;line-height:16px;color:#000;">2014-09-01 (01-09-2014)</div>
<div class="t" style="left:752.5px;top:395.96px;font-size:16px;line-height:16px;color:#000;">REC 17591</div>
<div class="t" style="left:1001.5px;top:395.96px;font-size:16px;line-height:16px;color:#000;">Payment</div>
<div class="t" style="left:1250.5px;top:395.96px;font-size:16px;line-height:16px;color:#000;">0.00 (0.0)</div>
<div class="t" style="left:1499.5px;top:395.96px;font-size:16px;line-height:16px;color:#000;">24675.68 (24,675.68)</div>
<div class="t" style="left:1748.5px;top:395.96px;font-size:16px;line-height:16px;color:#000;">1111593.70 (1,111,593.70)</div>
<div style="position:absolute;left:1px;top:417px;width:1992px;height:25px;background:#90ee90;"></div>
<div class="t" style="left:5.5px;top:421.96px;font-size:16px;line-height:16px;color:#000;">2014-10-03 (03-10-2014)</div>
<div class="t" style="left:254.5px;top:421.96px;font-size:16px;line-height:16px;color:#000;">CBG02</div>
<div class="t" style="left:503.5px;top:421.96px;font-size:16px;line-height:16px;color:#000;">2014-09-03 (03-09-2014)</div>
<div class="t" style="left:752.5px;top:421.96px;font-size:16px;line-height:16px;color:#000;">01-3144</div>
<div class="t" style="left:1001.5px;top:421.96px;font-size:16px;line-height:16px;color:#000;">Credit Note</div>
<div class="t" style="left:1250.5px;top:421.96px;font-size:16px;line-height:16px;color:#000;">0.00 (0.0)</div>
<div class="t" style="left:1499.5px;top:421.96px;font-size:16px;line-height:16px;color:#000;">681.65 (681.65)</div>
<div class="t" style="left:1748.5px;top:421.96px;font-size:16px;line-height:16px;color:#000;">1110912.05 (1,110,912.05)</div>
<div style="position:absolute;left:1px;top:443px;width:1992px;height:25px;background:#90ee90;"></div>
<div class="t" style="left:5.5px;top:447.96px;font-size:16px;line-height:16px;color:#000;">2014-10-03 (03-10-2014)</div>
<div class="t" style="left:254.5px;top:447.96px;font-size:16px;line-height:16px;color:#000;">CBG02</div>
<div class="t" style="left:503.5px;top:447.96px;font-size:16px;line-height:16px;color:#000;">2014-09-03 (03-09-2014)</div>
<div class="t" style="left:752.5px;top:447.96px;font-size:16px;line-height:16px;color:#000;">01-3146</div>
<div class="t" style="left:1001.5px;top:447.96px;font-size:16px;line-height:16px;color:#000;">Credit Note</div>
<div class="t" style="left:1250.5px;top:447.96px;font-size:16px;line-height:16px;color:#000;">0.00 (0.0)</div>
<div class="t" style="left:1499.5px;top:447.96px;font-size:16px;line-height:16px;color:#000;">1908.62 (1,908.62)</div>
<div class="t" style="left:1748.5px;top:447.96px;font-size:16px;line-height:16px;color:#000;">1109003.43 (1,109,003.43)</div>
<div style="position:absolute;left:1px;top:469px;width:1992px;height:25px;background:#90ee90;"></div>
<div class="t" style="left:5.5px;top:473.96px;font-size:16px;line-height:16px;color:#000;">2014-10-03 (03-10-2014)</div>
<div class="t" style="left:254.5px;top:473.96px;font-size:16px;line-height:16px;color:#000;">CBG02</div>
<div class="t" style="left:503.5px;top:473.96px;font-size:16px;line-height:16px;color:#000;">2014-09-01 (01-09-2014)</div>
<div class="t" style="left:752.5px;top:473.96px;font-size:16px;line-height:16px;color:#000;">REC 17591</div>
<div class="t" style="left:1001.5px;top:473.96px;font-size:16px;line-height:16px;color:#000;">Payment</div>
<div class="t" style="left:1250.5px;top:473.96px;font-size:16px;line-height:16px;color:#000;">0.00 (0.0)</div>
<div class="t" style="left:1499.5px;top:473.96px;font-size:16px;line-height:16px;color:#000;">24627.44 (24,627.44)</div>
<div class="t" style="left:1748.5px;top:473.96px;font-size:16px;line-height:16px;color:#000;">1084375.99 (1,084,375.99)</div>
<div style="position:absolute;left:249px;top:0px;width:1px;height:487px;background:#ffffff;"></div>
<div style="position:absolute;left:498px;top:0px;width:1px;height:487px;background:#ffffff;"></div>
<div style="position:absolute;left:747px;top:0px;width:1px;height:487px;background:#ffffff;"></div>
<div style="position:absolute;left:996px;top:0px;width:1px;height:487px;background:#ffffff;"></div>
<div style="position:absolute;left:1245px;top:0px;width:1px;height:487px;background:#ffffff;"></div>
<div style="position:absolute;left:1494px;top:0px;width:1px;height:487px;background:#ffffff;"></div>
<div style="position:absolute;left:1743px;top:0px;width:1px;height:487px;background:#ffffff;"></div>
</div>
<div style="position:absolute;left:550px;top:1340px;width:1993px;height:3px;background:#ffffff;"></div>
<div style="position:absolute;left:2543px;top:823px;width:26px;height:520px;background:#f0f0f0;"></div>
<div style="position:absolute;left:2551px;top:849px;width:11px;height:60px;background:#888888;"></div>
<div style="position:absolute;left:11px;top:1343px;width:2560px;height:1px;background:#d2d2d2;"></div>
<div style="position:absolute;left:11px;top:1344px;width:2560px;height:35px;background:#f0f0f0;"></div>
<div class="t" style="left:12.7px;top:1353.27px;font-size:17.4px;line-height:17.4px;color:#444444;">Page 1/5</div>
<div class="t" style="left:2360px;width:201px;text-align:right;top:1353.27px;font-size:17.4px;line-height:17.4px;color:#444444">Pane 2</div>
</body></html>
